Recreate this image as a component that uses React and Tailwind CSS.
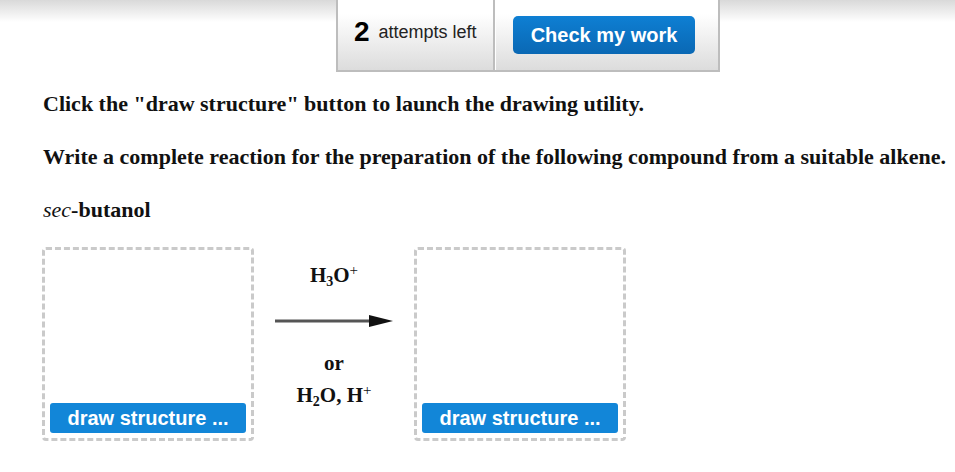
import React from "react";

const serif = { fontFamily: '"Liberation Serif", "Times New Roman", serif' };

const DrawBox = () => (
  <div className="w-[212px] h-[194px] border-[3px] border-dashed border-[#cacaca] rounded-[4px] flex flex-col justify-end px-[5px] pb-[5px]">
    <button className="h-[30px] w-full rounded-[3px] bg-[#1286d8] text-white font-bold text-[20px] leading-none font-['Liberation_Sans',Arial,sans-serif]">
      draw structure ...
    </button>
  </div>
);

const App = () => {
  return (
    <div className="w-[955px] h-[472px] overflow-hidden bg-white text-[#111]">
      <div className="bg-[linear-gradient(#d9d9d9_0px,#ffffff_22px)]">
        <div className="ml-[336px] w-[384px] h-[72px] flex border-2 border-t-0 border-[#bdbdbd] bg-[linear-gradient(#ffffff_20%,#dcdcdc_100%)] font-['Liberation_Sans',Arial,sans-serif]">
          <div className="w-[157px] flex items-center pl-[16px] pb-[6px] border-r-2 border-[#bdbdbd]">
            <span className="text-[28px] font-bold text-black leading-none">2</span>
            <span className="ml-[9px] text-[18px] text-[#222]">attempts left</span>
          </div>
          <div className="flex-1 border-l border-white pl-[17px] pt-[16px]">
            <button className="w-[182px] h-[38px] rounded-[5px] bg-[linear-gradient(#0e7fd3,#0a68b4)] text-white font-bold text-[20px] leading-none pb-[1px]">
              Check my work
            </button>
          </div>
        </div>
      </div>

      <div className="pl-[43px] font-bold text-[22px]" style={serif}>
        <p className="mt-[20px] leading-[24px]">
          Click the "draw structure" button to launch the drawing utility.
        </p>
        <p className="mt-[29px] leading-[24px]">
          Write a complete reaction for the preparation of the following compound from a suitable alkene.
        </p>
        <p className="mt-[29px] leading-[24px]">
          <span className="italic font-normal">sec</span>-butanol
        </p>
      </div>

      <div className="flex ml-[42px] mt-[25px]">
        <DrawBox />
        <div className="w-[160px] flex flex-col items-center font-bold text-[21px]" style={serif}>
          <div className="mt-[16px] leading-[24px]">
            H<sub className="text-[14px]">3</sub>O<sup className="text-[15px] font-normal top-[-0.5em]">+</sup>
          </div>
          <svg width="118" height="12" viewBox="0 0 118 12" className="mt-[28px]">
            <line x1="0" y1="6" x2="100" y2="6" stroke="#555" strokeWidth="3" />
            <polygon points="94,0 118,6 94,12" fill="#111" />
          </svg>
          <div className="mt-[24px] leading-[24px]">or</div>
          <div className="mt-[8px] leading-[24px]">
            H<sub className="text-[14px]">2</sub>O, H<sup className="text-[15px] font-normal top-[-0.5em]">+</sup>
          </div>
        </div>
        <DrawBox />
      </div>
    </div>
  );
};

export default App;
